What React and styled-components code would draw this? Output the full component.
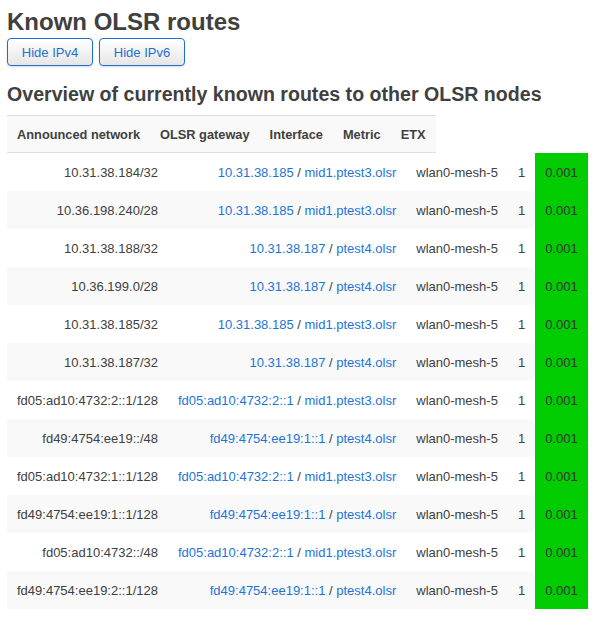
import React from 'react';
import styled, { createGlobalStyle } from 'styled-components';

const GlobalStyle = createGlobalStyle`
  body {
    margin: 0;
    padding: 7px;
    background: #fff;
    font-family: "Liberation Sans", Arial, sans-serif;
    font-size: 13px;
    color: #404040;
  }
`;

const Title = styled.h2`
  margin: 1px 0 0;
  font-size: 24px;
  line-height: 28px;
  font-weight: bold;
  color: #404040;
`;

const Toolbar = styled.div`
  display: flex;
  gap: 6px;
  margin-top: 2px;
`;

const ToggleButton = styled.button`
  height: 28px;
  width: 86px;
  padding: 0;
  font-family: inherit;
  font-size: 13px;
  color: #1f6fd0;
  border: 1px solid #1f6fd0;
  border-radius: 4px;
  background: linear-gradient(#ffffff, #e6e6e6);
  box-shadow: 0 1px 2px rgba(0, 0, 0, 0.15);
  cursor: pointer;
`;

const SubTitle = styled.h3`
  margin: 17px 0 9px;
  font-size: 19.6px;
  line-height: 23px;
  font-weight: bold;
  color: #404040;
`;

const HeadRow = styled.div`
  display: inline-flex;
  background: #f9f9f9;
  border-top: 1px solid #ddd;
  border-bottom: 1px solid #ddd;
`;

const HeadCell = styled.div`
  padding: 10px 10px 9px;
  line-height: 17px;
  font-size: 12.8px;
  font-weight: bold;
  color: #404040;
`;

const Table = styled.table`
  border-collapse: collapse;
  border-spacing: 0;
`;

const Row = styled.tr`
  background: ${p => (p.$odd ? '#f9f9f9' : '#fff')};
  & + & td {
    border-top: 1px solid #ddd;
  }
`;

const Cell = styled.td`
  padding: 0 10px;
  height: 38px;
  line-height: 17px;
  text-align: ${p => p.$align || 'left'};
  white-space: nowrap;
  color: #404040;
`;

const EtxCell = styled(Cell)`
  background: #00cc00;
  color: #333;
  text-align: center;
`;

const Link = styled.a`
  color: #1e74d6;
  text-decoration: none;
`;

const routes = [
  ['10.31.38.184/32', '10.31.38.185', 'mid1.ptest3.olsr'],
  ['10.36.198.240/28', '10.31.38.185', 'mid1.ptest3.olsr'],
  ['10.31.38.188/32', '10.31.38.187', 'ptest4.olsr'],
  ['10.36.199.0/28', '10.31.38.187', 'ptest4.olsr'],
  ['10.31.38.185/32', '10.31.38.185', 'mid1.ptest3.olsr'],
  ['10.31.38.187/32', '10.31.38.187', 'ptest4.olsr'],
  ['fd05:ad10:4732:2::1/128', 'fd05:ad10:4732:2::1', 'mid1.ptest3.olsr'],
  ['fd49:4754:ee19::/48', 'fd49:4754:ee19:1::1', 'ptest4.olsr'],
  ['fd05:ad10:4732:1::1/128', 'fd05:ad10:4732:2::1', 'mid1.ptest3.olsr'],
  ['fd49:4754:ee19:1::1/128', 'fd49:4754:ee19:1::1', 'ptest4.olsr'],
  ['fd05:ad10:4732::/48', 'fd05:ad10:4732:2::1', 'mid1.ptest3.olsr'],
  ['fd49:4754:ee19:2::1/128', 'fd49:4754:ee19:1::1', 'ptest4.olsr'],
];

const headers = ['Announced network', 'OLSR gateway', 'Interface', 'Metric', 'ETX'];

export default function App() {
  return (
    <>
      <GlobalStyle />
      <Title>Known OLSR routes</Title>
      <Toolbar>
        <ToggleButton>Hide IPv4</ToggleButton>
        <ToggleButton>Hide IPv6</ToggleButton>
      </Toolbar>
      <SubTitle>Overview of currently known routes to other OLSR nodes</SubTitle>
      <HeadRow>
        {headers.map(h => (
          <HeadCell key={h}>{h}</HeadCell>
        ))}
      </HeadRow>
      <Table>
        <tbody>
          {routes.map(([net, gw, host], i) => (
            <Row key={net} $odd={i % 2 === 1}>
              <Cell $align="right">{net}</Cell>
              <Cell $align="right">
                <Link href="#">{gw}</Link> / <Link href="#">{host}</Link>
              </Cell>
              <Cell>wlan0-mesh-5</Cell>
              <Cell>1</Cell>
              <EtxCell>0.001</EtxCell>
            </Row>
          ))}
        </tbody>
      </Table>
    </>
  );
}
